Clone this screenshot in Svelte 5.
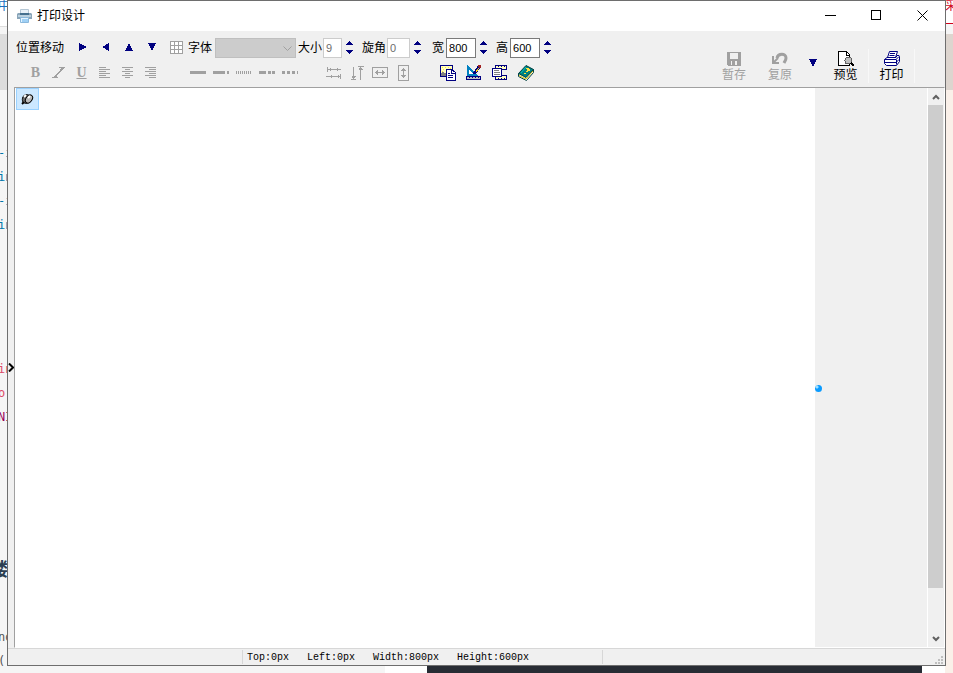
<script lang="ts">
  type Tool = { id: string; label: string };

  let paperWidth = $state('800');
  let paperHeight = $state('600');
  let fontSize = $state('9');
  let angle = $state('0');

  const paper = $derived({
    width: parseInt(paperWidth) || 0,
    height: parseInt(paperHeight) || 0,
  });

  const moves = [
    { label: '右移', d: 'M0 0v8l8-4z' },
    { label: '左移', d: 'M7 0v8L0 4z' },
    { label: '上移', d: 'M0 8h8L4 0z' },
    { label: '下移', d: 'M0 0h8L4 8z' },
  ];

  const textTools: Tool[] = [
    { id: 'bold', label: '粗体' },
    { id: 'italic', label: '斜体' },
    { id: 'underline', label: '下划线' },
    { id: 'left', label: '左对齐' },
    { id: 'center', label: '居中' },
    { id: 'right', label: '右对齐' },
  ];

  const lineTools = [
    { label: '实线', dash: '16 0' },
    { label: '长划线', dash: '12 2 2 2' },
    { label: '点线', dash: '1 1' },
    { label: '点划线', dash: '7 2 3 1' },
    { label: '虚线', dash: '3 2' },
  ];

  const sizeTools = [
    { label: '水平间距', d: 'M1.5 2v5M2 4.5h13M4.5 3v3M3.5 4v1M11.5 3v3M0 11.5h14M14.5 9v5M12.5 10v3M5.5 10v3' },
    { label: '垂直间距', d: 'M4.5 2v12M2 14.5h5M2.5 11.5h4M3 12.5h3M11.5 2v13M9 1.5h6M9.5 4.5h4M10 3.5h3' },
    { label: '等宽', d: 'M.5 2.5h15v10H.5zM3 7.5h10M5.5 5v5M4.5 6v3M10.5 5v5M11.5 6v3' },
    { label: '等高', d: 'M3.5 .5h10v15h-10zM8.5 3v10M6 5.5h5M7 4.5h3M6 10.5h5M7 11.5h3' },
  ];
</script>

{#snippet spinner(label: string)}
  <span class="spinner">
    <button aria-label="增加{label}"><svg width="8" height="4"><path d="M0 4h8L4 0z" /></svg></button>
    <button aria-label="减少{label}"><svg width="8" height="4"><path d="M0 0h8L4 4z" /></svg></button>
  </span>
{/snippet}

<div class="desktop">
  <!-- editor page behind the dialog -->
  <div class="backdrop" aria-hidden="true">
    <div class="side side-left">
      <b class="nav">中</b>
      <div class="band"></div>
      <div class="code blue"><p class="in">-i</p><p class="in">in</p><p class="in">-i</p><p class="in">in</p></div>
      <div class="code pink"><p class="in">in</p><p class="in">o</p><p class="in red">NI</p></div>
      <b class="heading">楼</b>
      <div class="code tail"><p class="in">nd</p><p class="in">(</p></div>
    </div>
    <div class="side side-right">
      <span class="tab">采</span>
      <div class="band"></div>
    </div>
    <div class="under"><i></i><i class="panel"></i></div>
  </div>

  <main class="window">
    <header class="titlebar">
      <svg class="smooth" width="15" height="14" viewBox="0 0 15 14">
        <path fill="#e8f1f8" stroke="#b4c6d4" d="M3.5 .5h8v5h-8z" />
        <path fill="#8aa5b9" d="M1 4h13l1 1v5H0V5z" />
        <path fill="#45708f" d="M3 4h9v2H3z" />
        <path fill="#b9d0df" d="M1 6h13v2H1z" />
        <path fill="#e4f4ff" stroke="#8ab8dc" d="M3.5 8.5h8v5h-8z" />
        <path fill="#9fd0f5" d="M5 10h6v3H5z" />
      </svg>
      <h1>打印设计</h1>
      <div class="caption">
        <button aria-label="最小化"><svg width="11" height="11"><path d="M0 5.5h11" /></svg></button>
        <button aria-label="最大化"><svg width="11" height="11"><path d="M.5 .5h9v9h-9z" /></svg></button>
        <button aria-label="关闭"><svg class="smooth" width="11" height="11"><path d="M.5 .5l10 10M10.5 .5l-10 10" /></svg></button>
      </div>
    </header>

    <div class="toolbar">
      <div class="tools">
        <div class="row">
          <span class="move-label">位置移动</span>
          {#each moves as move}
            <button class="tool navy" aria-label={move.label}><svg width="8" height="8"><path d={move.d} /></svg></button>
          {/each}
          <button class="tool grid" aria-label="表格">
            <svg width="13" height="13"><path fill="#fff" stroke="#a0a0a0" d="M.5 .5h12v12H.5zM4.500 0v13M8.500 0v13M0 4.500h13M0 8.500h13" /></svg>
          </button>
          <label for="font">字体</label>
          <span class="select">
            <select id="font" disabled></select>
            <svg width="9" height="6"><path d="M.5 .5l4 4 4-4" /></svg>
          </span>
          <label for="size">大小</label>
          <input id="size" class="w-size" bind:value={fontSize} disabled />
          {@render spinner('大小')}
          <label for="angle" class="apart">旋角</label>
          <input id="angle" class="w-angle" bind:value={angle} disabled />
          {@render spinner('旋角')}
          <label for="width" class="apart wide">宽</label>
          <input id="width" class="w-paper" bind:value={paperWidth} />
          {@render spinner('宽')}
          <label for="height" class="apart">高</label>
          <input id="height" class="w-paper" bind:value={paperHeight} />
          {@render spinner('高')}
        </div>

        <div class="row second">
          <div class="group mono">
            {#each textTools as tool}
              <button class="tool {tool.id}" aria-label={tool.label} disabled>
                {#if tool.id === 'bold'}
                  <b>B</b>
                {:else if tool.id === 'italic'}
                  <svg width="13" height="11"><path d="M7 .5h6M0 10.5h6M2.5 10l8-9M3.5 10l8-9" /></svg>
                {:else if tool.id === 'underline'}
                  <u>U</u>
                {:else if tool.id === 'left'}
                  <svg width="11" height="11"><path d="M0 .5h7M0 2.5h11M0 4.5h7M0 6.5h11M0 8.5h7M0 10.5h11" /></svg>
                {:else if tool.id === 'center'}
                  <svg width="11" height="11"><path d="M0 .5h11M3 2.5h5M0 4.5h11M3 6.5h5M0 8.5h11M3 10.5h5" /></svg>
                {:else}
                  <svg width="11" height="11"><path d="M0 .5h11M4 2.5h7M0 4.5h11M4 6.5h7M0 8.5h11M4 10.5h7" /></svg>
                {/if}
              </button>
            {/each}
          </div>
          <div class="group mono">
            {#each lineTools as line}
              <button class="tool" aria-label={line.label} disabled>
                <svg width="16" height="3"><path stroke-width="3" stroke-dasharray={line.dash} d="M0 1.5h16" /></svg>
              </button>
            {/each}
          </div>
          <div class="group mono">
            {#each sizeTools as tool}
              <button class="tool" aria-label={tool.label} disabled>
                <svg width="16" height="16"><path d={tool.d} /></svg>
              </button>
            {/each}
          </div>
          <div class="group colored">
            <button class="tool" aria-label="背景图">
              <svg width="16" height="16">
                <path fill="#ffffc0" stroke="#000080" d="M.5 .5h12v11H.5z" />
                <path fill="#ffe040" d="M2 2h1v1H2zM5 2h1v1H5zM8 2h1v1H8zM3 4h1v1H3zM6 4h1v1H6zM10 3h1v1h-1zM2 6h1v1H2z" />
                <path fill="#808080" d="M1 11V8h1V7h2v1h2v3z" />
                <path fill="#fff" stroke="#000080" d="M6.5 4.5h5l4 3v8h-9z" />
                <path fill="none" stroke="#000080" d="M11.5 5v3H15M8 8.5h2M8 10.5h5M8 12.5h5" />
              </svg>
            </button>
            <button class="tool" aria-label="设计">
              <svg width="16" height="16">
                <path fill="#fff" stroke="#0080c0" stroke-width="2" d="M2 2v8h8z" />
                <path fill="#c0c0c0" stroke="#000080" d="M.5 11.5h14v3H.5z" />
                <path stroke="#000080" d="M3.5 12v1M6.5 12v1M9.5 12v1M12.5 12v1" />
                <path stroke="#000080" stroke-width="3" d="M8 9l5-7" />
                <path stroke="#ffd800" d="M10 7l3-4" />
                <path fill="#a02020" d="M12 0h3v3h-2V2h-1z" />
              </svg>
            </button>
            <button class="tool" aria-label="页面设置">
              <svg width="16" height="16">
                <path fill="#ffffc0" stroke="#000080" d="M3.5 .5h11v4h-11zM3.5 10.5h11v4h-11z" />
                <path stroke="#000080" d="M6.5 1v1M9.5 1v1M12.5 1v1M6.5 13v1M9.5 13v1M12.5 13v1" />
                <path fill="#fff" stroke="#000080" d="M.5 3.5h9v8h-9z" />
                <path stroke="#808080" d="M2 5.5h5M2 7.5h6M2 9.5h6" />
              </svg>
            </button>
            <button class="tool" aria-label="帮助">
              <svg class="smooth" width="16" height="16">
                <path fill="#fff" stroke="#004040" d="M.5 8.500v3l8 4 7-8v-3z" />
                <path fill="none" stroke="#e0c000" d="M1 10.5l7 3.500 7-8" />
                <path fill="#008080" stroke="#004040" d="M.5 8.5L8 .5l7.500 4-7.500 8z" />
                <path stroke="#00c0c0" d="M3 8l5-6" />
                <path fill="#ffe040" d="M8 3h3v1h1v2h-2v1H8V6h1V4H8zM6 8h2v1H6z" />
              </svg>
            </button>
          </div>
        </div>
      </div>

      <div class="actions">
        <button class="action" disabled>
          <svg width="14" height="14"><path fill="#a0a0a0" d="M0 0h14v14H1l-1-1z" /><path fill="#f0f0f0" d="M3 1h8v6H3zM4 9h6v4H4z" /><path fill="#a0a0a0" d="M5 9h3v4H5z" /></svg>
          暂存
        </button>
        <button class="action" disabled>
          <svg class="smooth" width="16" height="13"><path fill="none" stroke="#a0a0a0" stroke-width="3" d="M5 6c1-5 9-5 9 0 0 2-1 3-2 5" /><path fill="none" stroke="#a0a0a0" stroke-width="2" d="M1 4v7h6" /><path stroke="#a0a0a0" stroke-width="2" d="M2 10l4-4" /></svg>
          复原
        </button>
        <button class="tool more navy" aria-label="更多"><svg width="8" height="8"><path d="M0 0h8L4 8z" /></svg></button>
        <button class="action ruled">
          <svg width="16" height="16">
            <path fill="#fff" stroke="#000" d="M.5 .5h8l3 3v11H.5z" />
            <path fill="none" stroke="#000" d="M8.5 0v4H12" />
            <circle cx="10.5" cy="9.5" r="3.5" fill="#c0c0c0" stroke="#606060" />
            <path stroke="#000" stroke-width="2" d="M13 12l3 3" />
          </svg>
          预览
        </button>
        <button class="action ruled">
          <svg class="smooth" width="16" height="15">
            <path fill="#fff" stroke="#000080" d="M5.5 .5h8l-2 6h-8z" />
            <path stroke="#000080" d="M6 2.5h5M5.500 4.500h5" />
            <path fill="#fff" stroke="#000080" d="M3 6.500h9l1-2h2l.5 1v5l-3 4h-10l-2-2v-4z" />
            <path fill="none" stroke="#000080" d="M.5 8.500h11.500l3-3M1 11.500h11l3-3M12.500 8.500v5" />
          </svg>
          打印
        </button>
      </div>
    </div>

    <div class="workspace">
      <button class="expander" aria-label="展开侧栏"><svg class="smooth" width="6" height="9"><path d="M1 .5l4 4-4 4" /></svg></button>
      <div class="canvas">
        <div class="viewport">
          <div class="sheet" style="height: {paper.height}px">
            <div class="paper" style="width: {paper.width}px">
              <button class="pin" aria-label="固定">
                <svg class="smooth" width="13" height="12">
                  <path stroke="#000" stroke-width="2" d="M1 11l3-3" />
                  <ellipse cx="5.500" cy="6" rx="4.500" ry="4" fill="#666" stroke="#000" transform="rotate(-50 5.500 6)" />
                  <ellipse cx="8" cy="6" rx="3" ry="4.500" fill="#bbb" stroke="#000" transform="rotate(35 8 6)" />
                  <path stroke="#fff" stroke-width="2" d="M3 4l2-2M7 5l2-2" />
                </svg>
              </button>
            </div>
            <span class="handle"></span>
          </div>
        </div>
        <div class="scrollbar">
          <button aria-label="向上滚动"><svg class="smooth" width="8" height="6"><path d="M1 5l3-3 3 3" /></svg></button>
          <div class="track"><div class="thumb"></div></div>
          <button aria-label="向下滚动"><svg class="smooth" width="8" height="6"><path d="M1 1l3 3 3-3" /></svg></button>
        </div>
      </div>
    </div>

    <footer class="statusbar">
      <div class="status-cell lead"></div>
      <div class="status-cell metrics">
        <span>Top:0px</span>
        <span>Left:0px</span>
        <span>Width:{paper.width}px</span>
        <span>Height:{paper.height}px</span>
      </div>
      <svg class="grip" width="8" height="8"><path d="M6 0h2v2H6zM3 3h2v2H3zM6 3h2v2H6zM0 6h2v2H0zM3 6h2v2H3zM6 6h2v2H6z" /></svg>
    </footer>
  </main>
</div>

<style>
  :global(body) {
    margin: 0;
  }

  .desktop {
    --face: #f0f0f0;
    --navy: #000080;
    --dim: #a0a0a0;
    position: relative;
    box-sizing: border-box;
    height: 100vh;
    padding: 0 7px 7px;
    overflow: hidden;
    background: #f5f5f5;
    font-family: "Liberation Sans", "Noto Sans CJK SC", sans-serif;
    font-size: 12px;
    line-height: 16px;
    color: #000;
  }

  * {
    box-sizing: border-box;
  }

  button {
    display: flex;
    align-items: center;
    justify-content: center;
    margin: 0;
    padding: 0;
    border: 0;
    background: none;
    font: inherit;
    color: inherit;
  }

  svg {
    display: block;
    flex: none;
    shape-rendering: crispEdges;
  }

  svg.smooth {
    shape-rendering: auto;
  }

  /* ── Page behind ── */
  .backdrop {
    position: absolute;
    inset: 0;
  }

  .side {
    position: absolute;
    top: 0;
    bottom: 0;
    width: 8px;
    overflow: hidden;
  }

  .side-left { left: 0; }
  .side-right { right: 0; background: #faf0e9; }

  .nav, .tab {
    display: block;
    height: 34px;
    background: #fff;
    line-height: 12px;
    white-space: nowrap;
  }

  .nav {
    color: #1a6fc0;
    font-weight: 400;
    text-indent: -2px;
    box-shadow: inset 0 -7px #f5f5f5, inset 0 -8px #ddd;
  }

  .tab { color: #d0021b; box-shadow: inset 0 -10px #f5f5f5, inset 0 -11px #d0021b; }

  .band { height: 56px; background: #ddd; }
  .side-right .band { background: #ddd5cf; }

  .code {
    font-family: "DejaVu Sans Mono", monospace;
    line-height: 24px;
  }

  .code p { margin: 0; white-space: nowrap; }
  .code .in { text-indent: -2px; }
  .blue { margin-top: 51px; color: #0077aa; }
  .pink { margin-top: 120px; color: #dd4a68; }
  .code .red { color: #990055; }

  .heading {
    display: block;
    margin-top: 128px;
    font-size: 18px;
    line-height: 26px;
    text-indent: -10px;
    white-space: nowrap;
    color: #2c3e50;
  }

  .tail { margin-top: 42px; color: #555; }

  .under {
    position: absolute;
    right: 8px;
    bottom: 0;
    left: 385px;
    display: flex;
    height: 8px;
    background: #fff;
  }

  .under i { width: 42px; }
  .under .panel { flex: 1; margin-right: 23px; background: #282c34; }

  /* ── Window ── */
  .window {
    position: relative;
    display: flex;
    flex-direction: column;
    height: 100%;
    border: 1px solid #6e6e6e;
    background: var(--face);
  }

  .titlebar {
    display: flex;
    flex: none;
    align-items: center;
    height: 30px;
    padding-left: 9px;
    background: #fff;
  }

  h1 {
    margin: 0 0 0 5px;
    font-size: 12px;
    font-weight: 400;
  }

  .caption {
    display: flex;
    align-self: stretch;
    margin-left: auto;
  }

  .caption button { width: 46px; padding-bottom: 2px; }
  .caption path { fill: none; stroke: #000; }

  .toolbar {
    display: flex;
    flex: none;
    justify-content: space-between;
    height: 56px;
    padding: 4px 30px 0 8px;
  }

  .row {
    display: flex;
    align-items: center;
    height: 25px;
    white-space: nowrap;
  }

  .move-label { margin-right: 7px; }

  .tool {
    flex: none;
    width: 23px;
    height: 23px;
  }

  .tool:disabled { color: var(--dim); }
  .navy path, .spinner path { fill: var(--navy); }
  .row > .navy { padding-bottom: 2px; }
  .grid { margin-left: 2px; }

  .select {
    position: relative;
    width: 81px;
    margin: 0 2px 0 3px;
  }

  .select select {
    display: block;
    width: 100%;
    height: 20px;
    border: 1px solid #bfbfbf;
    appearance: none;
    background: #ccc;
    opacity: 1;
  }

  .select svg {
    position: absolute;
    top: 8px;
    right: 4px;
    fill: none;
    stroke: var(--dim);
    shape-rendering: auto;
  }

  input {
    height: 20px;
    margin-left: 1px;
    padding: 0 2px;
    border: 1px solid #7a7a7a;
    background: #fff;
    font: 11px "Liberation Sans", sans-serif;
    color: #000;
  }

  input:disabled {
    border-color: #ccc;
    color: #6d6d6d;
  }

  .w-size { width: 19px; }
  .w-angle { width: 23px; }
  .w-paper { width: 30px; margin-left: 2px; }

  .spinner {
    display: flex;
    flex-direction: column;
    gap: 5px;
    margin-left: 3px;
  }

  .apart { margin-left: 9px; }
  .apart.wide { margin-left: 11px; }

  .second { padding-left: 8px; }
  .group { display: flex; margin-right: 24px; }
  .group + .group { margin-right: 21px; }
  .mono path { fill: none; stroke: var(--dim); }

  .bold b, .underline u {
    font-family: "Liberation Serif", serif;
    font-size: 14px;
    font-weight: 700;
  }

  .colored .tool { width: 26px; }

  .actions {
    display: flex;
    padding-top: 14px;
  }

  .action {
    flex-direction: column;
    justify-content: flex-start;
    width: 46px;
    height: 34px;
    padding-top: 1px;
  }

  .action svg { margin: auto 0; }
  .action:disabled { color: var(--dim); }
  .action.ruled { border-right: 1px solid #f8f8f8; }
  .more { width: 20px; height: 27px; }

  /* ── Design area ── */
  .workspace {
    display: flex;
    flex: 1;
    min-height: 0;
  }

  .expander {
    flex: none;
    width: 6px;
  }

  .expander path {
    fill: none;
    stroke: #000;
    stroke-width: 2;
  }

  .canvas {
    display: flex;
    flex: 1;
    min-width: 0;
    border-top: 1px solid var(--dim);
    border-left: 1px solid var(--dim);
    border-right: 1px solid #fff;
    border-bottom: 1px solid #fff;
  }

  .viewport {
    flex: 1;
    min-width: 0;
    overflow: hidden;
  }

  .sheet {
    display: flex;
    align-items: center;
  }

  .paper {
    flex: none;
    height: 100%;
    padding-left: 1px;
    background: #fff;
  }

  .pin {
    width: 23px;
    height: 22px;
    border: 1px solid #99d1ff;
    background: #cce8ff;
  }

  .handle {
    width: 7px;
    height: 7px;
    border-radius: 50%;
    background: radial-gradient(circle at 2px 2px, #9fe0ff 1px, #0a9bff 2px);
  }

  .scrollbar {
    display: flex;
    flex: none;
    flex-direction: column;
    width: 17px;
    border-left: 1px solid #fff;
  }

  .scrollbar button { height: 17px; padding-right: 1px; }

  .scrollbar path {
    fill: none;
    stroke: #606060;
    stroke-width: 2;
  }

  .track { flex: 1; }

  .thumb {
    width: 15px;
    height: 92%;
    background: #cdcdcd;
  }

  .statusbar {
    display: flex;
    flex: none;
    height: 17px;
    border-top: 1px solid #d7d7d7;
    font-family: "Liberation Mono", monospace;
    font-size: 10px;
  }

  .status-cell {
    flex: none;
    margin: 1px 0;
    border-right: 1px solid #d7d7d7;
    line-height: 16px;
  }

  .lead { width: 235px; }

  .metrics {
    display: flex;
    gap: 18px;
    width: 360px;
    padding-left: 4px;
    white-space: nowrap;
  }

  .grip {
    margin: auto 2px 1px auto;
    fill: #bfbfbf;
  }
</style>
